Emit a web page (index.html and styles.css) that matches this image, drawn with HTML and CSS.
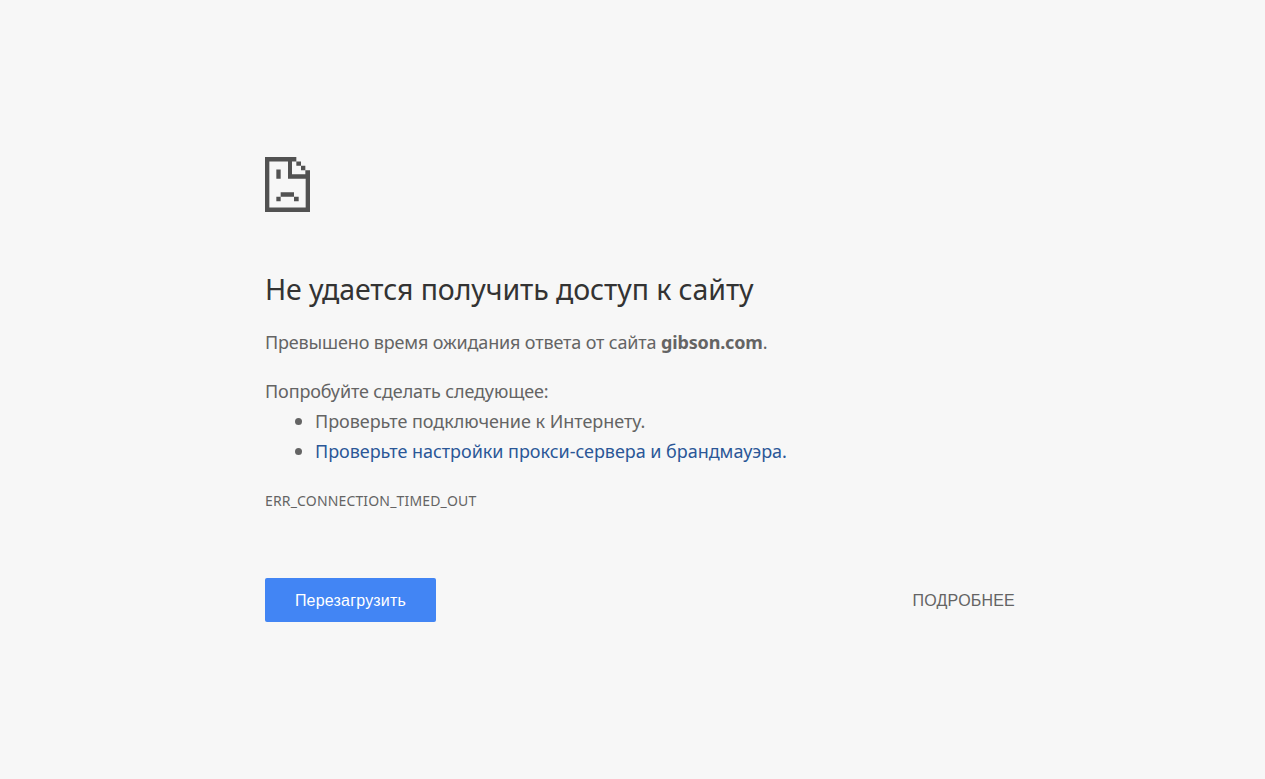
FILE: index.html
```
<!DOCTYPE html>
<html lang="ru">
<head>
  <meta charset="UTF-8" />
  <meta name="viewport" content="width=device-width, initial-scale=1" />
  <title>gibson.com</title>
  <link rel="stylesheet" href="styles.css">
</head>
<body>

  <main class="error-page">
    <svg class="sad-page" viewBox="0 0 135 162" preserveAspectRatio="none">
      <path d="M0 0H94V13H108V26H121V39H135V162H0ZM13 13V149H122V64H69V13ZM81 13V51H121V39H108V26H94V13Z" fill-rule="evenodd" />
      <path d="M34 37H47V64H34ZM47 104H87V117H47ZM34 117H47V130H34ZM87 117H101V130H87Z" />
    </svg>

    <h1>Не удается получить доступ к сайту</h1>
    <p class="summary">Превышено время ожидания ответа от сайта <strong>gibson.com</strong>.</p>

    <p class="hint">Попробуйте сделать следующее:</p>
    <ul>
      <li>Проверьте подключение к Интернету.</li>
      <li><a href="#">Проверьте настройки прокси-сервера и брандмауэра.</a></li>
    </ul>

    <p class="error-code">ERR_CONNECTION_TIMED_OUT</p>

    <div class="buttons">
      <button class="reload">Перезагрузить</button>
      <button class="details">ПОДРОБНЕЕ</button>
    </div>
  </main>

</body>
</html>
```
FILE: styles.css
```
* {
  box-sizing: border-box;
  margin: 0;
  padding: 0;
}

body {
  font-family: "Noto Sans", "Open Sans", sans-serif;
  font-size: 18px;
  line-height: 30px;
  background: #f7f7f7;
  color: #646464;
}

.error-page {
  width: 750px;
  margin-left: 265px;
  padding-top: 157px;
}

.sad-page {
  display: block;
  width: 45px;
  height: 55px;
  fill: #525252;
}

h1 {
  margin-top: 59px;
  font-size: 28.5px;
  font-weight: 400;
  line-height: 36px;
  letter-spacing: -0.08px;
  color: #333;
  white-space: nowrap;
}

.summary {
  margin-top: 20px;
  letter-spacing: -0.15px;
}

.hint {
  margin-top: 19px;
  letter-spacing: -0.13px;
}

ul {
  padding-left: 30px;
  list-style: none;
  letter-spacing: -0.04px;
}

li {
  display: flex;
  align-items: center;
  gap: 13px;
}

li::before {
  content: "";
  width: 7px;
  height: 7px;
  border-radius: 50%;
  background: #646464;
}

a {
  color: #2b5797;
  text-decoration: none;
}

.error-code {
  margin-top: 20px;
  font-size: 14px;
  letter-spacing: 0.16px;
}

.buttons {
  display: flex;
  justify-content: space-between;
  align-items: center;
  margin-top: 62px;
}

button {
  height: 44px;
  padding-top: 2px;
  border: none;
  font-family: "Liberation Sans", Arial, sans-serif;
  font-size: 16px;
  letter-spacing: 0.2px;
  cursor: pointer;
}

.reload {
  width: 171px;
  border-radius: 2px;
  background: #4285f4;
  color: #fff;
}

.details {
  background: none;
  color: #646464;
}
```
